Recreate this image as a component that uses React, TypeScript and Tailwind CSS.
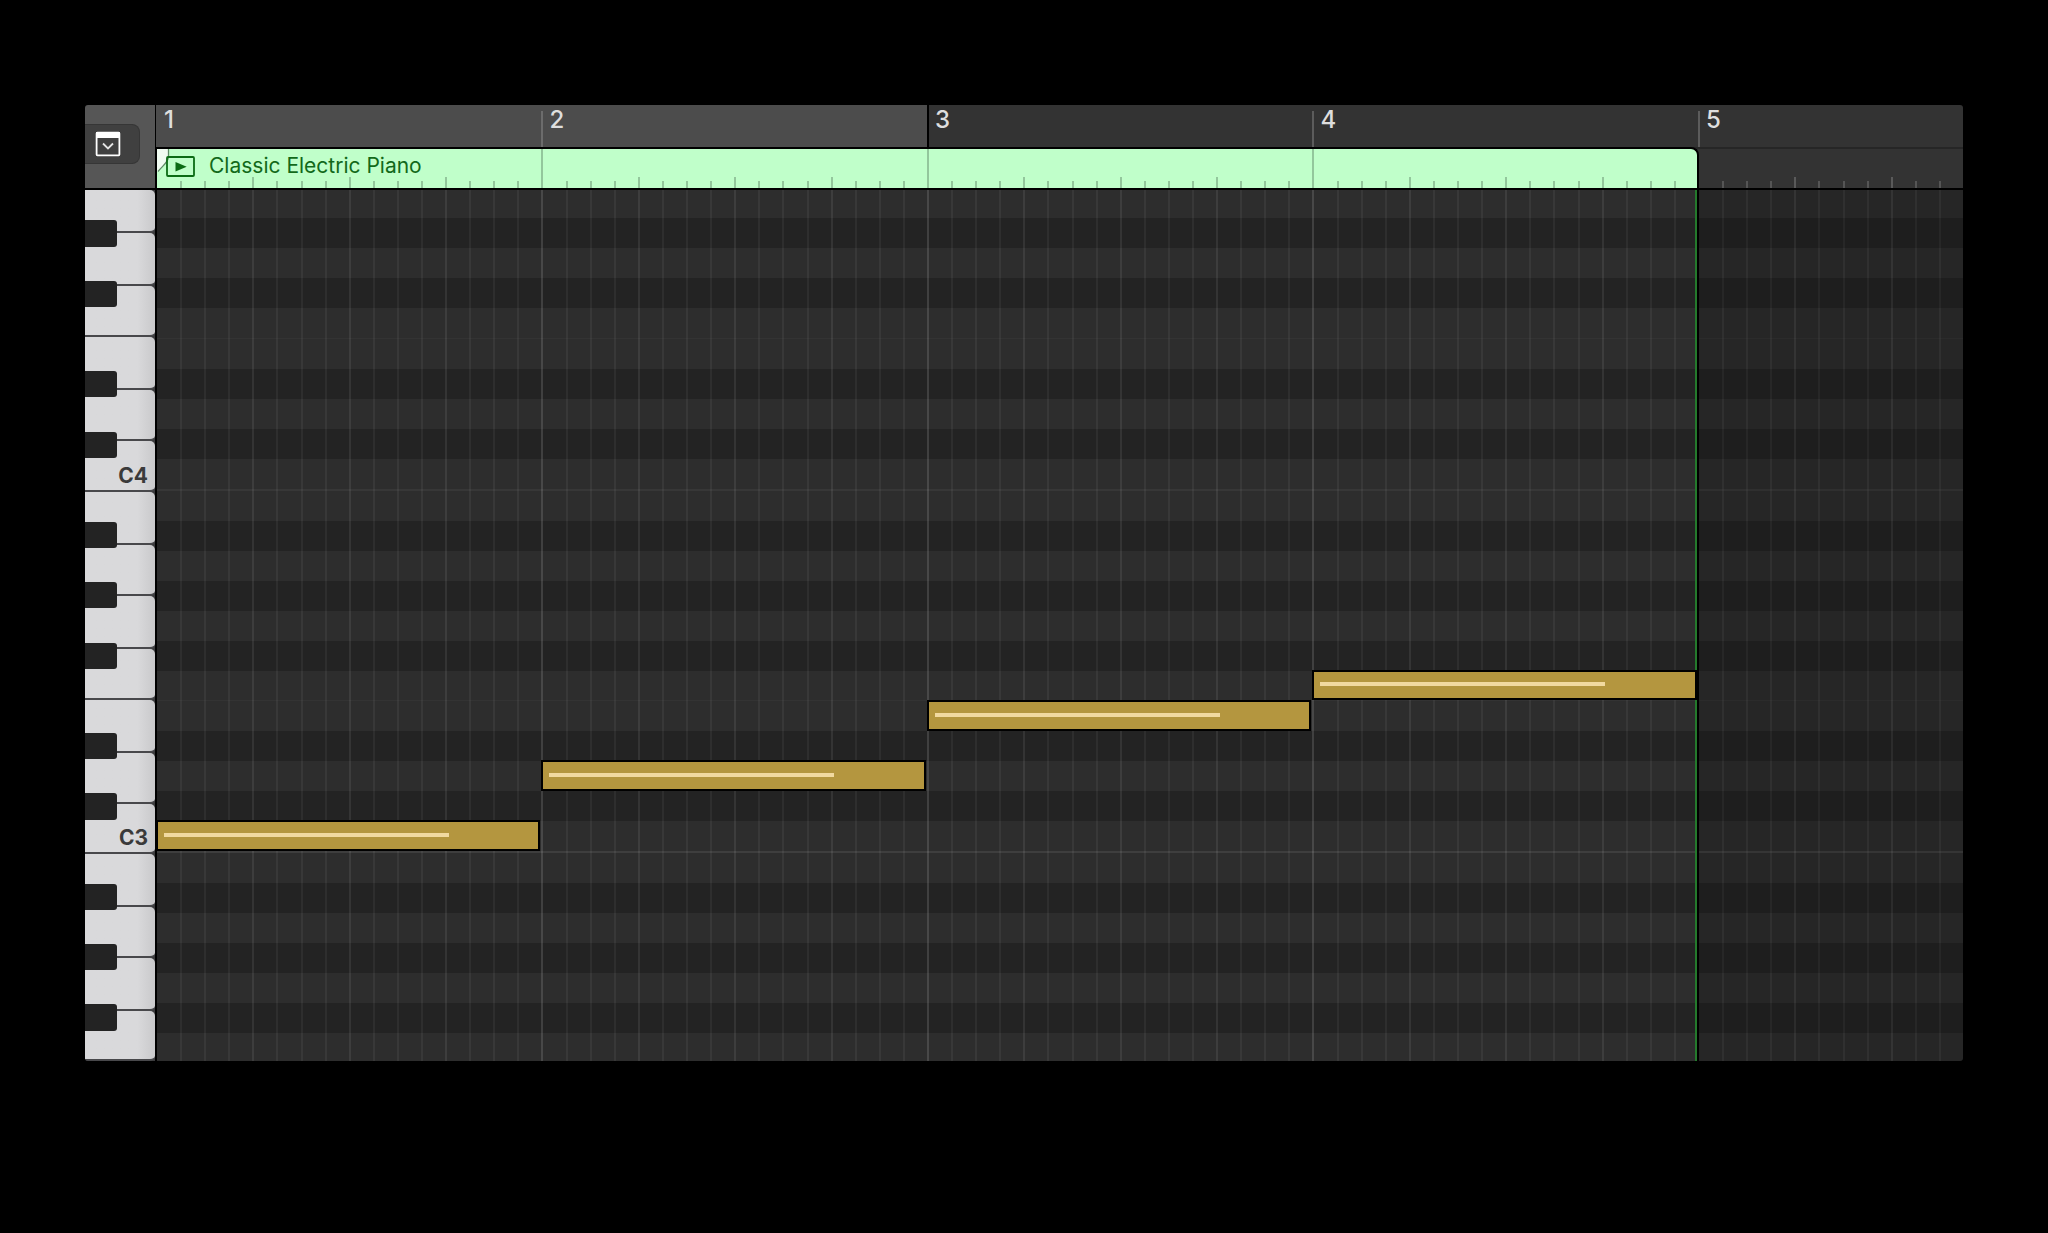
import React from "react";

const STEPS = 75;
const REGION_STEPS = 64;

type Note = { start: number; length: number };
type Row = { name: string; black?: boolean; partial?: boolean; line?: string; note?: Note };

const rows: Row[] = [
  { name: "A4", partial: true },
  { name: "G#4", black: true },
  { name: "G4" },
  { name: "F#4", black: true },
  { name: "F4", line: "border-b border-[#333]" },
  { name: "E4" },
  { name: "D#4", black: true },
  { name: "D4" },
  { name: "C#4", black: true },
  { name: "C4", line: "border-b-2 border-[#373737]" },
  { name: "B3" },
  { name: "A#3", black: true },
  { name: "A3" },
  { name: "G#3", black: true },
  { name: "G3" },
  { name: "F#3", black: true },
  { name: "F3", line: "border-b border-[#333]", note: { start: 49, length: 16 } },
  { name: "E3", note: { start: 33, length: 16 } },
  { name: "D#3", black: true },
  { name: "D3", note: { start: 17, length: 16 } },
  { name: "C#3", black: true },
  { name: "C3", line: "border-b-2 border-[#3e3e3e]", note: { start: 1, length: 16 } },
  { name: "B2" },
  { name: "A#2", black: true },
  { name: "A2" },
  { name: "G#2", black: true },
  { name: "G2" },
  { name: "F#2", black: true },
  { name: "F2", partial: true },
];

const whiteKeys = [
  { name: "A4", size: "h-[43px]" },
  { name: "G4", size: "h-[53px]" },
  { name: "F4", size: "h-[51px]" },
  { name: "E4", size: "h-[53px]" },
  { name: "D4", size: "h-[51px]" },
  { name: "C4", size: "h-[51px]", label: true },
  { name: "B3", size: "h-[53px]" },
  { name: "A3", size: "h-[51px]" },
  { name: "G3", size: "h-[53px]" },
  { name: "F3", size: "h-[51px]" },
  { name: "E3", size: "h-[53px]" },
  { name: "D3", size: "h-[51px]" },
  { name: "C3", size: "h-[50px]", label: true },
  { name: "B2", size: "h-[53px]" },
  { name: "A2", size: "h-[51px]" },
  { name: "G2", size: "h-[53px]" },
  { name: "F2", size: "h-[50px]" },
];

const bars = [
  { number: 1, look: "col-span-16 bg-[#4c4c4c]", tick: "bg-transparent" },
  { number: 2, look: "col-span-16 bg-[#4c4c4c]", tick: "mt-1.5 bg-[#6c6c6c]" },
  { number: 3, look: "col-span-16 bg-[#333]", tick: "bg-black" },
  { number: 4, look: "col-span-16 bg-[#333]", tick: "mt-1.5 bg-[#5c5c5c]" },
  { number: 5, look: "col-span-11 bg-[#333]", tick: "mt-1.5 bg-[#5c5c5c]" },
];

const steps = Array.from({ length: STEPS }, (_, i) => i);

function tickClass(step: number) {
  const inRegion = step < REGION_STEPS;
  if (step === 0 || step === REGION_STEPS) return "h-0";
  if (step % 16 === 0) return "h-full bg-[#93c79c]";
  if (step % 4 === 0) return inRegion ? "h-[11px] bg-[#93c79c]" : "h-[11px] bg-[#5a5a5a]";
  return inRegion ? "h-[7px] bg-[#93c79c]" : "h-[7px] bg-[#555]";
}

function lineClass(step: number) {
  if (step === 0 || step === REGION_STEPS) return "bg-transparent";
  if (step % 16 === 0) return "bg-white/13";
  if (step % 4 === 0) return "bg-white/8";
  return "bg-white/5";
}

function rowClass(row: Row) {
  const size = row.partial ? "flex-[28]" : "flex-[30]";
  const color = row.black ? "bg-[#232323]" : "bg-[#2d2d2d]";
  return `${size} ${color} ${row.line ?? ""}`;
}

function MenuIcon() {
  return (
    <svg width="26" height="26" viewBox="0 0 26 26" fill="none">
      <rect x="1.6" y="1.6" width="22.8" height="22.8" rx="0.8" stroke="#fff" strokeWidth="1.8" />
      <path d="M1 1h24v6H1z" fill="#fff" />
      <path d="M8 12.5l5 5 5-5" stroke="#e4e4e4" strokeWidth="1.8" />
    </svg>
  );
}

function PlayIcon() {
  return (
    <svg width="29" height="21" viewBox="0 0 29 21" fill="none">
      <rect x="1" y="1" width="27" height="19" rx="1" stroke="#0b6b14" strokeWidth="1.8" />
      <path d="M9.5 6v9.4l11.2-4.7z" fill="#0b6b14" />
    </svg>
  );
}

function LoopCorner() {
  return (
    <svg className="absolute left-0 top-0" width="13" height="24" viewBox="0 0 13 24">
      <path d="M0 0h11.5v7c0 6-5 9-10.500 15.500H0z" fill="#f0fbf1" />
      <path d="M11.500 0v7c0 6-5 9-10.500 15.500" fill="none" stroke="#5f8a66" strokeWidth="1.300" />
    </svg>
  );
}

function Ruler() {
  return (
    <div className="grid grid-cols-[repeat(75,minmax(0,1fr))] h-[42px]">
      {bars.map((bar) => (
        <div key={bar.number} className={`flex ${bar.look}`}>
          <span className={`w-0.5 ${bar.tick}`} />
          <span className="pl-1.5 pt-[3px] text-2xl leading-6 font-medium text-[#dedede]">
            {bar.number}
          </span>
        </div>
      ))}
    </div>
  );
}

function RegionStrip() {
  return (
    <div className="relative h-[41px] bg-[#333] border-t-2 border-[#262626]">
      <div className="grid grid-cols-[repeat(75,minmax(0,1fr))] h-full">
        <div className="relative col-span-64 -mt-0.5 -mr-px flex items-center gap-3.5 pl-[9px] bg-[#c0ffca] border-t-2 border-l border-r-2 border-black rounded-tr-lg">
          <LoopCorner />
          <span className="relative pb-1">
            <PlayIcon />
          </span>
          <h1 className="pb-[5px] text-[21px] leading-6 text-[#12691a]">
            Classic Electric Piano
          </h1>
        </div>
      </div>
      <div className="absolute inset-0 grid grid-cols-[repeat(75,minmax(0,1fr))] items-end">
        {steps.map((step) => (
          <span key={step} className={`w-[2px] ${tickClass(step)}`} />
        ))}
      </div>
    </div>
  );
}

function Keyboard() {
  return (
    <div className="relative w-[70px] shrink-0 bg-[#3c3c3e]">
      {whiteKeys.map((key) => (
        <div
          key={key.name}
          className={`flex items-end justify-end pr-[7px] pb-0.5 border-b-2 border-[#48484b] rounded-r-[5px] bg-linear-to-r from-[#d9d9db] from-75% to-[#c9c9cb] ${key.size}`}
        >
          {key.label && (
            <span className="text-[21px] leading-6 font-bold text-[#3a3a3a]">
              {key.name}
            </span>
          )}
        </div>
      ))}
      <div className="absolute inset-y-0 left-0 w-8 flex flex-col">
        {rows.map((row) => (
          <div key={row.name} className={`py-0.5 ${row.partial ? "flex-[28]" : "flex-[30]"}`}>
            {row.black && <div className="h-full bg-[#232323] rounded-r-[3px]" />}
          </div>
        ))}
      </div>
    </div>
  );
}

function NoteBlock({ note }: { note: Note }) {
  return (
    <div
      className="z-10 -mt-px mr-px flex items-center pl-1.5 pb-0.5 bg-[#b4963f] border-2 border-black"
      style={{ gridColumn: `${note.start} / span ${note.length}` }}
    >
      <div className="h-1 w-[76%] bg-[#f1d9a0]" />
    </div>
  );
}

function NoteGrid() {
  return (
    <div className="relative flex-1 flex flex-col">
      {rows.map((row) => (
        <div
          key={row.name}
          className={`grid grid-cols-[repeat(75,minmax(0,1fr))] ${rowClass(row)}`}
        >
          {row.note && <NoteBlock note={row.note} />}
        </div>
      ))}
      <div className="absolute inset-0 grid grid-cols-[repeat(75,minmax(0,1fr))]">
        {steps.map((step) => (
          <span key={step} className={`w-[2px] ${lineClass(step)}`} />
        ))}
      </div>
      {/* end of region marker and the dimmed part after it */}
      <div className="absolute inset-0 grid grid-cols-[repeat(75,minmax(0,1fr))]">
        <div className="col-span-64 -mr-px border-l border-r-2 border-black">
          <div className="h-full border-r-2 border-[#247a2c]" />
        </div>
        <div className="col-span-11 bg-black/14" />
      </div>
    </div>
  );
}

export default function App() {
  return (
    <div className="min-h-screen bg-black px-[85px] py-[105px] font-[Inter,'Liberation_Sans',sans-serif]">
      <main className="rounded-[3px] overflow-hidden">
        <div className="flex">
          <div className="w-[70px] shrink-0 pt-[19px] bg-[#565656]">
            <button
              aria-label="Menu"
              className="flex items-center w-[55px] h-10 pl-2.5 bg-[#404040] border border-l-0 border-[#363636] rounded-r-lg"
            >
              <MenuIcon />
            </button>
          </div>
          <div className="flex-1 border-l border-black">
            <Ruler />
            <RegionStrip />
          </div>
        </div>
        <div className="flex h-[873px] border-t-2 border-black">
          <Keyboard />
          <div className="flex flex-1 border-l border-black">
            <NoteGrid />
          </div>
        </div>
      </main>
    </div>
  );
}
